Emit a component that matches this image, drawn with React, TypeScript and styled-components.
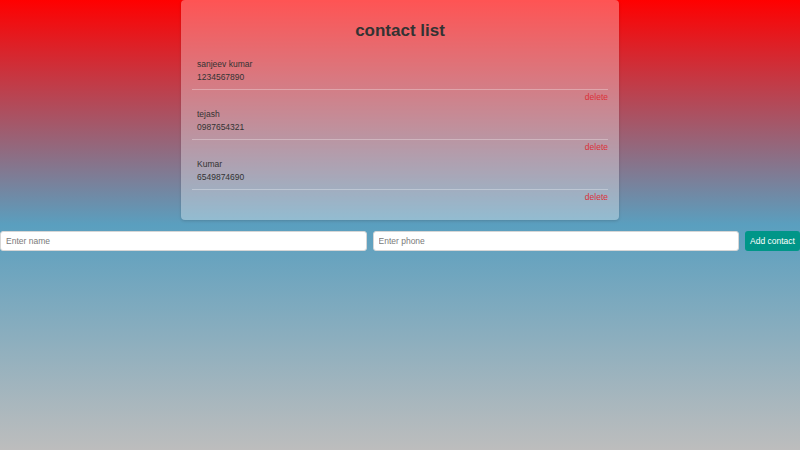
import React, { useState } from "react";
import styled, { createGlobalStyle } from "styled-components";

interface Contact {
  id: number;
  name: string;
  phone: string;
}

const GlobalStyle = createGlobalStyle`
  html, body {
    margin: 0;
    padding: 0;
    height: 100%;
  }
  body {
    font-family: "Liberation Sans", Arial, sans-serif;
    background: linear-gradient(to bottom, #ff0000 0%, #5a9fbf 50%, #bdbdbd 100%);
    background-attachment: fixed;
    min-height: 450px;
  }
`;

const Page = styled.div`
  display: flex;
  flex-direction: column;
  align-items: center;
`;

const Card = styled.div`
  width: 438px;
  box-sizing: border-box;
  padding: 0 11px 12px;
  background-color: rgba(255, 255, 255, 0.33);
  border-radius: 4px;
  box-shadow: 0 1px 3px rgba(0, 0, 0, 0.15);
`;

const Title = styled.h2`
  margin: 0;
  padding: 21px 0 17px;
  font-size: 17px;
  line-height: 20px;
  text-align: center;
  color: #333;
`;

const List = styled.ul`
  list-style: none;
  margin: 0;
  padding: 0;
`;

const Item = styled.li`
  margin-bottom: 4px;
`;

const Info = styled.div`
  padding: 0 5px 5px;
  border-bottom: 1px solid rgba(255, 255, 255, 0.3);
  color: #333;
  font-size: 8.5px;
  line-height: 13px;
`;

const Line = styled.div``;

const Delete = styled.div`
  margin-top: 1px;
  text-align: right;
  font-size: 8.5px;
  line-height: 13px;
  color: #dc3138;
  cursor: pointer;
`;

const Form = styled.form`
  display: flex;
  gap: 6px;
  width: 100%;
  margin-top: 11px;
`;

const Input = styled.input`
  flex: 1;
  min-width: 0;
  height: 20px;
  box-sizing: border-box;
  padding: 0 5px;
  border: 1px solid #d6d6d6;
  border-radius: 3px;
  background: #fff;
  font-family: "Liberation Sans", Arial, sans-serif;
  font-size: 8.5px;
  color: #333;
  outline: none;

  &::placeholder {
    color: #7a7a7a;
  }
`;

const AddButton = styled.button`
  width: 55px;
  height: 20px;
  padding: 0;
  border: none;
  border-radius: 3px;
  background-color: #009688;
  color: #fff;
  font-family: "Liberation Sans", Arial, sans-serif;
  font-size: 8.5px;
  cursor: pointer;
`;

const initial: Contact[] = [
  { id: 1, name: "sanjeev kumar", phone: "1234567890" },
  { id: 2, name: "tejash", phone: "0987654321" },
  { id: 3, name: "Kumar", phone: "6549874690" },
];

export default function App() {
  const [contacts, setContacts] = useState<Contact[]>(initial);
  const [name, setName] = useState("");
  const [phone, setPhone] = useState("");

  const add = (e: React.FormEvent) => {
    e.preventDefault();
    if (!name || !phone) return;
    setContacts([...contacts, { id: Date.now(), name, phone }]);
    setName("");
    setPhone("");
  };

  return (
    <>
      <GlobalStyle />
      <Page>
        <Card>
          <Title>contact list</Title>
          <List>
            {contacts.map((c) => (
              <Item key={c.id}>
                <Info>
                  <Line>{c.name}</Line>
                  <Line>{c.phone}</Line>
                </Info>
                <Delete onClick={() => setContacts(contacts.filter((x) => x.id !== c.id))}>
                  delete
                </Delete>
              </Item>
            ))}
          </List>
        </Card>
        <Form onSubmit={add}>
          <Input placeholder="Enter name" value={name} onChange={(e) => setName(e.target.value)} />
          <Input placeholder="Enter phone" value={phone} onChange={(e) => setPhone(e.target.value)} />
          <AddButton type="submit">Add contact</AddButton>
        </Form>
      </Page>
    </>
  );
}
